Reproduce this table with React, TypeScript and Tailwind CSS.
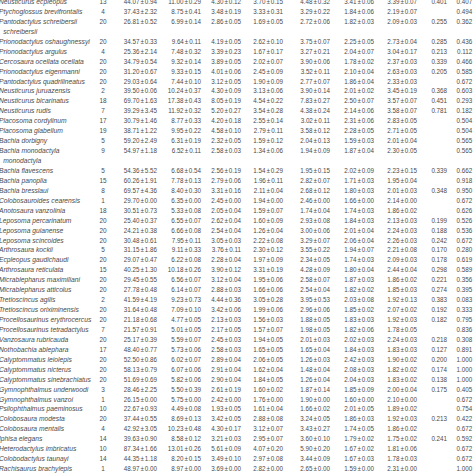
import React from "react";

type Row = {
  name: string;
  cont?: string;
  n: string;
  v: string[];
  a: string;
  b: string;
};

const rows: Row[] = [
  { name: "Neusticurus ecpleopus", n: "13", v: ["44.07 ± 0.94", "11.00 ± 0.29", "4.30 ± 0.12", "3.70 ± 0.15", "4.48 ± 0.32", "3.41 ± 0.06", "3.39 ± 0.07"], a: "0.401", b: "0.407" },
  { name: "Ptychoglossus brevifrontalis", n: "4", v: ["37.43 ± 2.32", "8.75 ± 0.41", "3.48 ± 0.19", "3.33 ± 0.31", "3.29 ± 0.22", "1.84 ± 0.06", "2.19 ± 0.07"], a: "", b: "0.494" },
  { name: "Pantodactylus schreibersii", cont: "schreibersii", n: "20", v: ["26.81 ± 0.52", "6.99 ± 0.14", "2.86 ± 0.05", "1.69 ± 0.05", "2.72 ± 0.06", "1.82 ± 0.03", "2.09 ± 0.03"], a: "0.255", b: "0.362" },
  { name: "Prionodactylus oshaughnessyi", n: "20", v: ["34.57 ± 0.33", "9.64 ± 0.11", "4.19 ± 0.05", "2.62 ± 0.10", "3.75 ± 0.07", "2.25 ± 0.05", "2.73 ± 0.04"], a: "0.285", b: "0.436" },
  { name: "Prionodactylus argulus", n: "4", v: ["25.36 ± 2.14", "7.48 ± 0.32", "3.39 ± 0.23", "1.67 ± 0.17", "3.27 ± 0.21", "2.04 ± 0.07", "3.04 ± 0.17"], a: "0.213", b: "0.112" },
  { name: "Cercosaura ocellata ocellata", n: "20", v: ["34.79 ± 0.54", "9.32 ± 0.14", "3.89 ± 0.05", "2.02 ± 0.07", "3.90 ± 0.06", "1.78 ± 0.02", "2.37 ± 0.03"], a: "0.339", b: "0.466" },
  { name: "Prionodactylus eigenmanni", n: "20", v: ["31.20 ± 0.67", "9.33 ± 0.15", "4.01 ± 0.06", "2.45 ± 0.09", "3.52 ± 0.11", "2.10 ± 0.04", "2.63 ± 0.03"], a: "0.205", b: "0.585" },
  { name: "Pantodactylus quadrilineatus", n: "20", v: ["29.03 ± 0.64", "7.44 ± 0.10", "3.12 ± 0.05", "1.90 ± 0.09", "2.77 ± 0.07", "1.86 ± 0.04", "2.33 ± 0.03"], a: "", b: "0.672" },
  { name: "Neusticurus juruazensis", n: "2", v: ["39.50 ± 0.06", "10.24 ± 0.37", "4.30 ± 0.09", "3.13 ± 0.06", "3.90 ± 0.14", "2.01 ± 0.02", "3.45 ± 0.19"], a: "0.368", b: "0.603" },
  { name: "Neusticurus bicarinatus", n: "18", v: ["69.70 ± 1.63", "17.38 ± 0.43", "8.05 ± 0.19", "4.54 ± 0.22", "7.83 ± 0.27", "2.50 ± 0.07", "3.57 ± 0.07"], a: "0.451", b: "0.293" },
  { name: "Neusticurus rudis", n: "7", v: ["39.29 ± 3.45", "11.92 ± 0.32", "5.20 ± 0.27", "3.54 ± 0.28", "4.38 ± 0.24", "2.14 ± 0.06", "3.58 ± 0.07"], a: "0.781", b: "0.182" },
  { name: "Placosoma cordylinum", n: "17", v: ["30.79 ± 1.46", "8.77 ± 0.33", "4.20 ± 0.18", "2.55 ± 0.14", "3.02 ± 0.11", "2.31 ± 0.06", "2.83 ± 0.05"], a: "", b: "0.504" },
  { name: "Placosoma glabellum", n: "19", v: ["38.71 ± 1.22", "9.95 ± 0.22", "4.58 ± 0.10", "2.79 ± 0.11", "3.58 ± 0.12", "2.28 ± 0.05", "2.71 ± 0.05"], a: "", b: "0.504" },
  { name: "Bachia dorbigny", n: "5", v: ["59.20 ± 2.49", "6.31 ± 0.19", "2.32 ± 0.05", "1.59 ± 0.12", "2.04 ± 0.13", "1.59 ± 0.03", "2.01 ± 0.04"], a: "", b: "0.565" },
  { name: "Bachia monodactyla", cont: "monodactyla", n: "9", v: ["54.97 ± 1.18", "6.52 ± 0.11", "2.58 ± 0.03", "1.34 ± 0.06", "1.94 ± 0.09", "1.87 ± 0.04", "2.30 ± 0.05"], a: "", b: "0.565" },
  { name: "Bachia flavescens", n: "5", v: ["54.36 ± 5.52", "6.68 ± 0.54", "2.56 ± 0.19", "1.54 ± 0.29", "1.95 ± 0.15", "2.02 ± 0.09", "2.23 ± 0.15"], a: "0.339", b: "0.662" },
  { name: "Bachia panoplia", n: "15", v: ["60.26 ± 1.91", "7.78 ± 0.13", "2.79 ± 0.06", "1.96 ± 0.11", "2.82 ± 0.07", "1.71 ± 0.03", "1.95 ± 0.04"], a: "", b: "0.918" },
  { name: "Bachia bresslaui", n: "8", v: ["69.57 ± 4.36", "8.40 ± 0.30", "3.31 ± 0.16", "2.11 ± 0.04", "2.68 ± 0.12", "1.80 ± 0.03", "2.01 ± 0.03"], a: "0.348", b: "0.950" },
  { name: "Colobosauroides cearensis", n: "1", v: ["29.70 ± 0.00", "6.35 ± 0.00", "2.45 ± 0.00", "1.94 ± 0.00", "2.46 ± 0.00", "1.66 ± 0.00", "2.14 ± 0.00"], a: "", b: "0.672" },
  { name: "Anotosaura vanzolinia", n: "18", v: ["30.51 ± 0.73", "5.33 ± 0.08", "2.05 ± 0.04", "1.59 ± 0.07", "1.74 ± 0.04", "1.74 ± 0.03", "1.86 ± 0.02"], a: "", b: "0.626" },
  { name: "Leposoma percarinatum", n: "20", v: ["25.40 ± 0.37", "6.55 ± 0.07", "2.62 ± 0.04", "1.60 ± 0.09", "2.93 ± 0.08", "1.84 ± 0.03", "2.13 ± 0.03"], a: "0.199", b: "0.526" },
  { name: "Leposoma guianense", n: "20", v: ["24.21 ± 0.38", "6.66 ± 0.08", "2.54 ± 0.04", "1.26 ± 0.04", "3.00 ± 0.06", "2.01 ± 0.04", "2.24 ± 0.03"], a: "0.188", b: "0.536" },
  { name: "Leposoma scincoides", n: "20", v: ["30.48 ± 0.61", "7.95 ± 0.11", "3.05 ± 0.03", "2.22 ± 0.08", "3.29 ± 0.07", "2.06 ± 0.04", "2.26 ± 0.03"], a: "0.242", b: "0.672" },
  { name: "Arthrosaura kockii", n: "5", v: ["31.15 ± 1.86", "9.11 ± 0.33", "3.76 ± 0.11", "2.30 ± 0.12", "3.55 ± 0.22", "1.94 ± 0.07", "2.21 ± 0.08"], a: "0.170", b: "0.280" },
  { name: "Ecpleopus gaudichaudi", n: "20", v: ["29.07 ± 0.47", "6.22 ± 0.08", "2.28 ± 0.04", "1.97 ± 0.09", "2.34 ± 0.05", "1.74 ± 0.03", "2.09 ± 0.03"], a: "0.178", b: "0.619" },
  { name: "Arthrosaura reticulata", n: "15", v: ["40.25 ± 1.30", "10.18 ± 0.26", "3.90 ± 0.12", "3.31 ± 0.19", "4.28 ± 0.09", "1.80 ± 0.04", "2.44 ± 0.04"], a: "0.298", b: "0.589" },
  { name: "Micrablepharus maximiliani", n: "20", v: ["29.45 ± 0.55", "6.56 ± 0.07", "3.12 ± 0.04", "1.95 ± 0.06", "2.58 ± 0.07", "1.87 ± 0.03", "1.86 ± 0.02"], a: "0.221", b: "0.356" },
  { name: "Micrablepharus atticolus", n: "20", v: ["27.78 ± 0.48", "6.14 ± 0.07", "2.88 ± 0.03", "1.66 ± 0.06", "2.54 ± 0.04", "1.82 ± 0.02", "1.85 ± 0.03"], a: "0.274", b: "0.395" },
  { name: "Tretioscincus agilis", n: "2", v: ["41.59 ± 4.19", "9.23 ± 0.73", "4.44 ± 0.36", "3.05 ± 0.28", "3.95 ± 0.53", "2.03 ± 0.08", "1.92 ± 0.13"], a: "0.383", b: "0.083" },
  { name: "Tretioscincus oriximinensis", n: "20", v: ["31.64 ± 0.48", "7.09 ± 0.10", "3.42 ± 0.06", "1.99 ± 0.06", "2.96 ± 0.06", "1.85 ± 0.02", "2.07 ± 0.02"], a: "0.192", b: "0.333" },
  { name: "Procellosaurinus erythrocercus", n: "20", v: ["21.18 ± 0.68", "4.77 ± 0.05", "2.13 ± 0.03", "1.56 ± 0.03", "1.88 ± 0.05", "1.83 ± 0.03", "1.92 ± 0.03"], a: "0.182", b: "0.795" },
  { name: "Procellosaurinus tetradactylus", n: "7", v: ["21.57 ± 0.91", "5.01 ± 0.05", "2.17 ± 0.05", "1.57 ± 0.07", "1.98 ± 0.05", "1.82 ± 0.06", "1.78 ± 0.05"], a: "", b: "0.836" },
  { name: "Vanzosaura rubricauda", n: "20", v: ["25.17 ± 0.39", "5.59 ± 0.07", "2.45 ± 0.03", "1.94 ± 0.05", "2.01 ± 0.03", "2.02 ± 0.03", "2.24 ± 0.03"], a: "0.218", b: "0.308" },
  { name: "Nothobachia ablephara", n: "17", v: ["48.40 ± 0.77", "5.73 ± 0.06", "2.58 ± 0.03", "1.65 ± 0.05", "1.65 ± 0.04", "1.84 ± 0.03", "1.83 ± 0.03"], a: "0.127", b: "0.891" },
  { name: "Calyptommatus leiolepis", n: "20", v: ["52.50 ± 0.86", "6.02 ± 0.07", "2.89 ± 0.04", "2.06 ± 0.05", "1.26 ± 0.03", "2.42 ± 0.03", "1.90 ± 0.02"], a: "0.200", b: "1.000" },
  { name: "Calyptommatus nicterus", n: "20", v: ["58.13 ± 0.79", "6.07 ± 0.06", "2.91 ± 0.04", "1.62 ± 0.04", "1.48 ± 0.04", "2.08 ± 0.03", "1.82 ± 0.02"], a: "0.174", b: "1.000" },
  { name: "Calyptommatus sinebrachiatus", n: "20", v: ["51.69 ± 0.69", "5.82 ± 0.06", "2.90 ± 0.04", "1.84 ± 0.05", "1.26 ± 0.04", "2.04 ± 0.03", "1.83 ± 0.02"], a: "0.138", b: "1.000" },
  { name: "Gymnophthalmus underwoodi", n: "3", v: ["28.46 ± 2.25", "5.50 ± 0.39", "2.61 ± 0.19", "1.60 ± 0.02", "1.87 ± 0.14", "1.85 ± 0.09", "2.00 ± 0.04"], a: "0.175", b: "0.405" },
  { name: "Gymnophthalmus vanzoi", n: "1", v: ["26.15 ± 0.00", "5.75 ± 0.00", "2.42 ± 0.00", "1.76 ± 0.00", "1.90 ± 0.00", "1.60 ± 0.00", "2.10 ± 0.00"], a: "", b: "0.672" },
  { name: "Psilophthalmus paeminosus", n: "10", v: ["22.67 ± 0.93", "4.49 ± 0.08", "1.93 ± 0.05", "1.61 ± 0.04", "1.66 ± 0.02", "2.01 ± 0.05", "1.89 ± 0.02"], a: "", b: "0.754" },
  { name: "Colobosaura modesta", n: "20", v: ["37.44 ± 0.55", "8.69 ± 0.13", "3.42 ± 0.05", "2.88 ± 0.08", "3.24 ± 0.05", "1.86 ± 0.03", "1.92 ± 0.03"], a: "0.213", b: "0.422" },
  { name: "Colobosaura mentalis", n: "4", v: ["42.92 ± 3.05", "10.23 ± 0.48", "4.30 ± 0.17", "3.12 ± 0.07", "3.43 ± 0.27", "1.74 ± 0.05", "1.86 ± 0.02"], a: "", b: "0.672" },
  { name: "Iphisa elegans", n: "14", v: ["39.63 ± 0.90", "8.58 ± 0.12", "3.21 ± 0.03", "2.95 ± 0.07", "3.60 ± 0.10", "1.79 ± 0.02", "1.75 ± 0.02"], a: "0.241", b: "0.592" },
  { name: "Heterodactylus imbricatus", n: "10", v: ["87.34 ± 1.66", "13.01 ± 0.26", "5.61 ± 0.09", "4.07 ± 0.20", "5.90 ± 0.20", "1.67 ± 0.02", "1.81 ± 0.06"], a: "", b: "0.672" },
  { name: "Colobodactylus taunayi", n: "14", v: ["44.35 ± 1.18", "8.20 ± 0.15", "3.49 ± 0.10", "2.97 ± 0.08", "3.44 ± 0.09", "1.67 ± 0.03", "1.78 ± 0.03"], a: "", b: "0.672" },
  { name: "Rachisaurus brachylepis", n: "1", v: ["48.97 ± 0.00", "8.97 ± 0.00", "3.69 ± 0.00", "2.82 ± 0.00", "2.65 ± 0.00", "1.59 ± 0.00", "2.31 ± 0.00"], a: "", b: "1.000" },
];

export default function App() {
  return (
    <div className="w-[474px] h-[474px] overflow-hidden bg-white text-[#4a4a4a] font-['Liberation_Sans',Arial,sans-serif]">
      <div className="-mt-[3px] flex flex-col">
        {rows.map((r, i) => (
          <div
            key={i}
            className="grid grid-cols-[96px_14px_47px_44px_40px_42px_47px_44px_43px_30px_26px] leading-[9.93px] text-[8px] whitespace-nowrap"
          >
            <div className="italic flex flex-col -ml-[1px] origin-left scale-x-[0.84]">
              <span>{r.name}</span>
              {r.cont && <span className="pl-[5px]">{r.cont}</span>}
            </div>
            <div className="text-center origin-center scale-x-[0.8]">{r.n}</div>
            {r.v.map((v, j) => (
              <div key={j} className="text-right origin-right scale-x-[0.78] [word-spacing:-0.9px]">
                {v}
              </div>
            ))}
            <div className="text-right origin-right scale-x-[0.78]">{r.a}</div>
            <div className="text-right origin-right scale-x-[0.78] pr-[1px]">{r.b}</div>
          </div>
        ))}
      </div>
    </div>
  );
}
